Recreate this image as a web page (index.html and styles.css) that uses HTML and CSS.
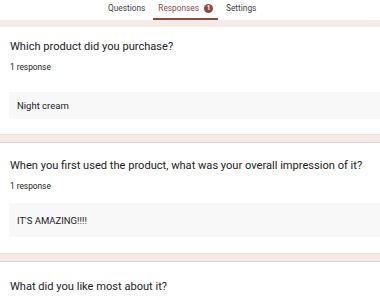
FILE: index.html
```html
<!DOCTYPE html>
<html>
<head>
<meta charset="utf-8">
<link rel="stylesheet" href="styles.css">
</head>
<body>
<nav class="tabs">
  <a class="tab">Questions</a>
  <a class="tab active">Responses <span class="badge">1</span></a>
  <a class="tab">Settings</a>
</nav>
<div class="band band-top"></div>
<section class="card card-1">
  <h2 class="title">Which product did you purchase?</h2>
  <p class="count">1 response</p>
  <div class="answer answer-1">Night cream</div>
</section>
<div class="band"></div>
<section class="card card-2">
  <h2 class="title">When you first used the product, what was your overall impression of it?</h2>
  <p class="count">1 response</p>
  <div class="answer answer-2">IT'S AMAZING!!!!</div>
</section>
<div class="band"></div>
<section class="card card-3">
  <h2 class="title">What did you like most about it?</h2>
</section>
</body>
</html>
```
FILE: styles.css
```css
* { box-sizing: border-box; }
html, body { margin: 0; padding: 0; background: #fff; }
body {
  font-family: Roboto, "Liberation Sans", Arial, sans-serif;
  color: #202124;
  overflow: hidden;
  width: 380px;
  height: 300px;
}
.tabs {
  display: flex;
  height: 20px;
  padding-left: 103px;
  gap: 3px;
  align-items: stretch;
}
.tab {
  display: flex;
  align-items: center;
  padding: 0 5px 2px;
  font-size: 8.3px;
  color: #3c4043;
  border-bottom: 2px solid transparent;
}
.tab.active {
  color: #8c4b3c;
  border-bottom-color: #8c4b3c;
}
.badge {
  display: inline-flex;
  align-items: center;
  justify-content: center;
  width: 9px;
  height: 9px;
  margin-left: 5px;
  border-radius: 50%;
  background: #8c4b3c;
  color: #fff;
  font-size: 6.5px;
  font-weight: 700;
}
.band {
  height: 9px;
  background: #f4ebe9;
  border-top: 1px solid #ebe3e1;
  border-bottom: 1px solid #dcd7d6;
}
.band-top {
  height: 7px;
  border-top: none;
  border-bottom: none;
}
.card {
  padding: 0 0 0 10px;
}
.title {
  margin: 0;
  font-size: 11.1px;
  font-weight: 400;
  line-height: 14px;
}
.count {
  margin: 8px 0 0;
  font-size: 8.3px;
  line-height: 10px;
}
.answer {
  margin-left: -1px;
  background: #f8f8f8;
  font-size: 9.5px;
  display: flex;
  align-items: center;
  padding-left: 8px;
}
.card-1 { padding-top: 13px; height: 107px; }
.answer-1 { margin-top: 20px; height: 27px; }
.card-2 { padding-top: 16px; height: 110px; }
.answer-2 { margin-top: 12px; height: 34px; }
.card-3 { padding-top: 18px; }
```
